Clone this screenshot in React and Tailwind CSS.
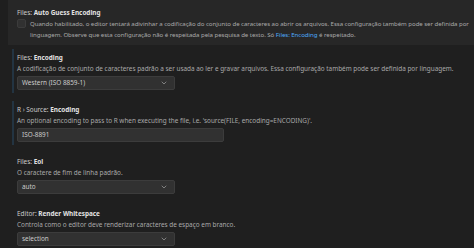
import { ChevronDown } from 'lucide-react'

function Title({ scope, name }) {
  return (
    <div className="h-[11px] leading-[11px] text-[#cccccc]">
      {scope} <span className="font-bold text-[#e2e2e2]">{name}</span>
    </div>
  )
}

function Select({ value }) {
  return (
    <div className="mt-[2px] w-[158px] h-[14px] bg-[#313131] border border-[#3c3c3c] rounded-[2px] flex items-center justify-between pl-[4px] pr-[6px] text-[#cccccc]">
      <span>{value}</span>
      <ChevronDown size={8} strokeWidth={2} className="text-[#a8a8a8]" />
    </div>
  )
}

function Item({ scope, name, desc, focused, children }) {
  return (
    <div className="pl-[4px] py-[4px]">
      <div
        className={`border-l-2 pl-[3px] py-[3px] ${focused ? 'border-[#233442]' : 'border-transparent'}`}
      >
        <Title scope={scope} name={name} />
        <div className="h-[11px] leading-[11px] text-[#a9a9a9] whitespace-nowrap">{desc}</div>
        {children}
      </div>
    </div>
  )
}

export default function App() {
  return (
    <div
      className="w-[474px] h-[248px] overflow-hidden bg-[#1f1f1f] text-[6.4px] pl-[8px]"
      style={{ fontFamily: '"Noto Sans", "Open Sans", sans-serif' }}
    >
      <div className="bg-[#272727] pl-[9px] pt-[7px] pb-[5px] h-[45px]">
        <Title scope="Files:" name="Auto Guess Encoding" />
        <div className="flex">
          <div className="w-[9px] h-[9px] mt-[1px] bg-[#313131] border border-[#3c3c3c] rounded-[2px] shrink-0" />
          <div className="ml-[4px] leading-[11px] text-[#a9a9a9] text-[6.1px] tracking-[-0.05px]">
            <div className="whitespace-nowrap">
              Quando habilitado, o editor tentará adivinhar a codificação do conjunto de caracteres ao abrir os arquivos. Essa configuração também pode ser definida por
            </div>
            <div className="whitespace-nowrap">
              linguagem. Observe que esta configuração não é respeitada pela pesquisa de texto. Só{' '}
              <span className="text-[#4daafc]">Files: Encoding</span> é respeitado.
            </div>
          </div>
        </div>
      </div>

      <Item
        focused
        scope="Files:"
        name="Encoding"
        desc="A codificação de conjunto de caracteres padrão a ser usada ao ler e gravar arquivos. Essa configuração também pode ser definida por linguagem."
      >
        <Select value="Western (ISO 8859-1)" />
      </Item>

      <Item
        focused
        scope="R › Source:"
        name="Encoding"
        desc="An optional encoding to pass to R when executing the file, i.e. 'source(FILE, encoding=ENCODING)'."
      >
        <div className="mt-[2px] w-[207px] h-[14px] bg-[#313131] border border-[#3c3c3c] rounded-[2px] flex items-center pl-[4px] text-[#cccccc]">
          ISO-8891
        </div>
      </Item>

      <Item scope="Files:" name="Eol" desc="O caractere de fim de linha padrão.">
        <Select value="auto" />
      </Item>

      <Item
        scope="Editor:"
        name="Render Whitespace"
        desc="Controla como o editor deve renderizar caracteres de espaço em branco."
      >
        <Select value="selection" />
      </Item>
    </div>
  )
}
